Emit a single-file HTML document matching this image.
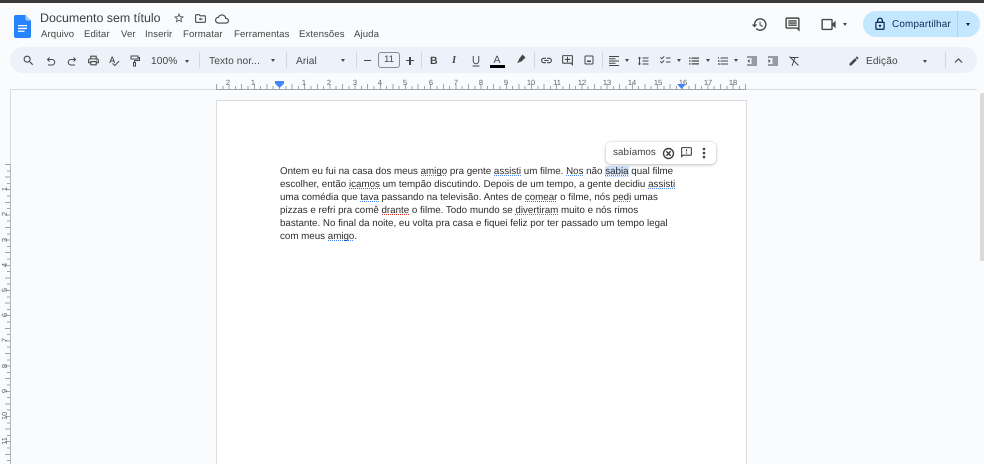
<!DOCTYPE html>
<html lang="pt"><head><meta charset="utf-8"><title>Documento sem título</title>
<style>
html,body{margin:0;padding:0;width:984px;height:464px;overflow:hidden;background:#f9fbfd}
#w{position:absolute;left:0;top:0;width:984px;height:464px;overflow:hidden;background:#f9fbfd;font-family:"Liberation Sans",Arial,sans-serif;color:#444746;text-rendering:geometricPrecision;filter:blur(.3px)}
.a{position:absolute;white-space:nowrap}
#top{left:0;top:0;width:984px;height:3px;background:#3a3a3a}
.m{top:28.500px;font-size:9.600px;line-height:12px;color:#444746;letter-spacing:.1px}
#tb{left:10px;top:47px;width:967px;height:26px;border-radius:13px;background:#edf2fa}
.t{top:54.500px;font-size:10.200px;line-height:13px;color:#444746;letter-spacing:.1px}
.s{top:52px;width:1px;height:16px;background:#d3d6da}
.ar{width:0;height:0;border-left:2.500px solid transparent;border-right:2.500px solid transparent;border-top:3px solid #444746}
svg.i{position:absolute;fill:#444746}
svg.o{position:absolute;fill:none;stroke:#444746;stroke-width:2}
#page{left:215.500px;top:100px;width:531px;height:370px;background:#fff;border:1px solid #dadce0;box-sizing:border-box}
.l{left:280px;font-size:9.780px;line-height:13px;color:#2b2b2b}
.bu{background:repeating-linear-gradient(90deg,#4285f4 0,#4285f4 1px,#fff 1px,#fff 2px) 0 calc(100% - 1px)/100% 1px no-repeat}
.ru{background:repeating-linear-gradient(90deg,#d93025 0,#d93025 1px,#fff 1px,#fff 2px) 0 calc(100% - 1px)/100% 1px no-repeat}
.rn{top:79px;font-size:7.500px;line-height:8px;color:#5f6368;transform:translateX(-50%)}
.vn{left:1px;font-size:7.500px;line-height:8px;color:#5f6368;transform:rotate(-90deg);width:8px;text-align:center}
#hr{left:216px;top:84px;width:530px;height:5px;background:repeating-linear-gradient(90deg,#a0a4a8 0,#a0a4a8 1px,transparent 1px,transparent 12.600px) 0 0/100% 100% no-repeat,repeating-linear-gradient(90deg,#a0a4a8 0,#a0a4a8 1px,transparent 1px,transparent 6.300px) 0 2px/100% 3px no-repeat}
#hl{left:10px;top:89px;width:967px;height:1px;background:#dadce0}
#hl2{left:216px;top:88.500px;width:530px;height:1px;background:#a0a4a8}
#vl{left:10px;top:90px;width:1px;height:374px;background:#dadce0}
#vr{left:5px;top:164px;width:5px;height:300px;background:repeating-linear-gradient(180deg,#a0a4a8 0,#a0a4a8 1px,transparent 1px,transparent 12.600px) 0 0/100% 100% no-repeat,repeating-linear-gradient(180deg,#a0a4a8 0,#a0a4a8 1px,transparent 1px,transparent 6.300px) 2px 0/3px 100% no-repeat}
#vl2{left:10px;top:164px;width:1px;height:300px;background:#b4b7ba}
#sb{left:980px;top:93px;width:4px;height:168px;background:#dadada;border-radius:2px 0 0 2px}
#share{left:863px;top:11px;width:117px;height:26px;border-radius:13px;background:#c2e7ff}
#pop{left:606px;top:142px;width:110px;height:22px;background:#fff;border-radius:5px;box-shadow:0 1px 3px rgba(60,64,67,.3),0 0 2px rgba(60,64,67,.15)}
</style></head><body><div id="w">
<div class="a" id="top"></div>

<svg class="a" style="left:14px;top:15px" width="17" height="23" viewBox="0 0 17 23"><path d="M2 0h9.500L17 5.500V21a2 2 0 0 1-2 2H2a2 2 0 0 1-2-2V2a2 2 0 0 1 2-2z" fill="#2684fc"/><path d="M11.500 0L17 5.500h-4a1.500 1.500 0 0 1-1.500-1.500z" fill="#a9cdfd"/><path d="M4 10h9v1.300H4zM4 12.800h9v1.300H4zM4 15.600h6.500v1.300H4z" fill="#fff"/></svg>
<div class="a" style="left:40px;top:10px;font-size:12.400px;line-height:16px;color:#3c4043">Documento sem título</div>
<svg class="i" style="left:173px;top:12px" width="12" height="12" viewBox="0 0 24 24"><path d="M22 9.240l-7.190-.62L12 2 9.190 8.630 2 9.240l5.460 4.730L5.820 21 12 17.270 18.180 21l-1.630-7.030L22 9.240zM12 15.400l-3.760 2.270 1-4.280-3.320-2.880 4.380-.38L12 6.100l1.710 4.040 4.380.38-3.320 2.880 1 4.280L12 15.400z"/></svg>
<svg class="i" style="left:194px;top:12px" width="13" height="13" viewBox="0 0 24 24"><path d="M20 6h-8l-2-2H4c-1.100 0-2 .9-2 2v12c0 1.100.9 2 2 2h16c1.100 0 2-.9 2-2V8c0-1.100-.9-2-2-2zm0 12H4V6h5.170l2 2H20v10zM9 13l3-3v2h4v2h-4v2z"/></svg>
<svg class="i" style="left:215px;top:12px" width="14" height="14" viewBox="0 0 24 24"><path d="M19.350 10.040A7.490 7.490 0 0 0 12 4C9.110 4 6.600 5.640 5.350 8.040A5.994 5.994 0 0 0 0 14c0 3.310 2.690 6 6 6h13c2.760 0 5-2.240 5-5 0-2.640-2.050-4.780-4.650-4.960zM19 18H6c-2.210 0-4-1.790-4-4s1.790-4 4-4h.71A5.500 5.500 0 0 1 12 6a5.500 5.500 0 0 1 5.500 5.500v.5H19a3 3 0 0 1 0 6z"/></svg>

<div class="a m" style="left:41px">Arquivo</div><div class="a m" style="left:84px">Editar</div><div class="a m" style="left:121px">Ver</div><div class="a m" style="left:145px">Inserir</div><div class="a m" style="left:183px">Formatar</div><div class="a m" style="left:234px">Ferramentas</div><div class="a m" style="left:299px">Extensões</div><div class="a m" style="left:354px">Ajuda</div>

<svg class="i" style="left:751px;top:16px" width="17" height="17" viewBox="0 0 24 24"><path d="M13 3a9 9 0 0 0-9 9H1l4 4 4-4H6a7 7 0 1 1 2.050 4.950L6.640 18.360A9 9 0 1 0 13 3zm-1 5v5l4.280 2.540.72-1.210-3.500-2.080V8z"/></svg>
<svg class="i" style="left:784px;top:16px" width="17" height="17" viewBox="0 0 24 24"><path d="M20 2H4c-1.100 0-2 .9-2 2v12c0 1.100.9 2 2 2h14l4 4V4c0-1.100-.9-2-2-2zm0 15.170L18.830 16H4V4h16v13.170zM6 12h12v2H6zm0-3h12v2H6zm0-3h12v2H6z"/></svg>
<svg class="i" style="left:820px;top:16px" width="17" height="17" viewBox="0 0 24 24"><path d="M18 10.480V6c0-1.100-.9-2-2-2H4c-1.100 0-2 .9-2 2v12c0 1.100.9 2 2 2h12c1.100 0 2-.9 2-2v-4.480l4 3.980v-11zM16 18H4V6h12z"/></svg>
<div class="a ar" style="left:843px;top:23px"></div>
<div class="a" id="share"></div>
<div class="a" style="left:957px;top:11px;width:1px;height:26px;background:#a8d4f0"></div>
<svg class="a" style="left:873px;top:17px;fill:#041e49" width="14" height="14" viewBox="0 0 24 24"><path d="M18 8h-1V6c0-2.760-2.240-5-5-5S7 3.240 7 6v2H6c-1.100 0-2 .9-2 2v10c0 1.100.9 2 2 2h12c1.100 0 2-.9 2-2V10c0-1.100-.9-2-2-2zM9 6c0-1.660 1.340-3 3-3s3 1.340 3 3v2H9V6zm9 14H6V10h12v10zm-6-3a2 2 0 1 0 0-4 2 2 0 0 0 0 4z"/></svg>
<div class="a" style="left:892px;top:17.500px;font-size:9.900px;line-height:13px;color:#0b2a55;letter-spacing:.2px">Compartilhar</div>
<div class="a ar" style="left:966px;top:23px;border-top-color:#041e49"></div>

<div class="a" id="tb"></div>
<svg class="i" style="left:21.500px;top:54px" width="13" height="13" viewBox="0 0 24 24"><path d="M15.500 14h-.79l-.28-.27A6.470 6.470 0 0 0 16 9.500 6.500 6.500 0 1 0 9.500 16c1.610 0 3.090-.59 4.230-1.570l.27.28v.79l5 4.990L20.490 19l-4.990-5zm-6 0C7.010 14 5 11.990 5 9.500S7.010 5 9.500 5 14 7.010 14 9.500 11.990 14 9.500 14z"/></svg>
<svg class="o" style="left:46px;top:56px" width="10" height="11" viewBox="0 0 20 22" stroke-width="2.400"><path d="M7 3L3 7l4 4M3 7h9a5.500 5.500 0 0 1 0 11H4"/></svg>
<svg class="o" style="left:67px;top:56px" width="10" height="11" viewBox="0 0 20 22" stroke-width="2.400"><path d="M13 3l4 4-4 4M17 7H8a5.500 5.500 0 0 0 0 11h8"/></svg>
<svg class="i" style="left:87px;top:54px" width="13" height="13" viewBox="0 0 24 24"><path d="M19 8h-1V3H6v5H5c-1.660 0-3 1.340-3 3v6h4v4h12v-4h4v-6c0-1.660-1.340-3-3-3zM8 5h8v3H8V5zm8 14H8v-4h8v4zm2-4v-2H6v2H4v-4c0-.55.45-1 1-1h14c.55 0 1 .45 1 1v4h-2zm0-4.500a1 1 0 1 0 0 2 1 1 0 0 0 0-2z"/></svg>
<svg class="i" style="left:108px;top:54.500px" width="12" height="12" viewBox="0 0 24 24"><path d="M12.450 16h2.090L9.430 3H7.570L2.460 16h2.090l1.120-3h5.640l1.140 3zm-6.020-5L8.500 5.480 10.570 11H6.430zm15.160.59l-8.090 8.090L9.830 16l-1.410 1.410 5.090 5.090L23 13l-1.410-1.410z"/></svg>
<svg class="o" style="left:130px;top:55px" width="10" height="12" viewBox="0 0 20 24"><path d="M2 2h14v6H2zM16 5h3v6H9v4"/><path d="M7 15h4v7H7z"/></svg>
<div class="a t" style="left:151px">100%</div><div class="a ar" style="left:185px;top:59.500px"></div>
<div class="a s" style="left:199px"></div>
<div class="a t" style="left:209px">Texto nor...</div><div class="a ar" style="left:271px;top:59px"></div>
<div class="a s" style="left:286px"></div>
<div class="a t" style="left:296px">Arial</div><div class="a ar" style="left:341px;top:59px"></div>
<div class="a s" style="left:356px"></div>
<div class="a" style="left:364px;top:60px;width:7px;height:1.200px;background:#444746"></div>
<div class="a" style="left:378px;top:52px;width:22px;height:16px;box-sizing:border-box;border:1px solid #8a8d90;border-radius:3px;font-size:9.500px;line-height:14px;text-align:center;color:#444746">11</div>
<div class="a" style="left:406px;top:60px;width:8px;height:1.200px;background:#444746"></div><div class="a" style="left:409.400px;top:56.500px;width:1.200px;height:8px;background:#444746"></div>
<div class="a s" style="left:421px"></div>
<div class="a" style="left:430px;top:54.500px;font-size:10.500px;line-height:12px;font-weight:700;color:#444746">B</div>
<div class="a" style="left:452px;top:54.500px;font-size:10.500px;line-height:12px;font-style:italic;font-weight:700;color:#444746;font-family:'Liberation Serif',serif">I</div>
<svg class="o" style="left:472px;top:55px" width="8" height="12" viewBox="0 0 16 24"><path d="M2.500 2v10a5.500 5.500 0 0 0 11 0V2M1 22h14"/></svg>
<div class="a" style="left:493.500px;top:54px;font-size:10.500px;line-height:12px;color:#444746">A</div>
<div class="a" style="left:490px;top:65px;width:15px;height:2.500px;background:#000"></div>
<svg class="i" style="left:516px;top:54px" width="10" height="10" viewBox="0 0 20 20"><path d="M13 1l6 6-8 8-4 1-1.500 1.500-3.500-.5 3-3 1-4z"/></svg>
<div class="a s" style="left:534px"></div>
<svg class="i" style="left:540px;top:54px" width="13" height="13" viewBox="0 0 24 24"><path d="M3.900 12c0-1.710 1.390-3.100 3.100-3.100h4V7H7c-2.760 0-5 2.240-5 5s2.240 5 5 5h4v-1.900H7c-1.710 0-3.100-1.390-3.100-3.100zM8 13h8v-2H8v2zm9-6h-4v1.900h4c1.710 0 3.100 1.390 3.100 3.100s-1.390 3.100-3.100 3.100h-4V17h4c2.760 0 5-2.240 5-5s-2.240-5-5-5z"/></svg>
<svg class="i" style="left:561px;top:54px" width="13" height="13" viewBox="0 0 24 24"><path d="M20 2H4c-1.100 0-2 .9-2 2v12c0 1.100.9 2 2 2h14l4 4V4c0-1.100-.9-2-2-2zm0 15.170L18.830 16H4V4h16v13.170zM13 5h-2v4H7v2h4v4h2v-4h4V9h-4z"/></svg>
<svg class="i" style="left:583px;top:54px" width="12" height="12" viewBox="0 0 24 24"><path d="M19 3H5c-1.100 0-2 .9-2 2v14c0 1.100.9 2 2 2h14c1.100 0 2-.9 2-2V5c0-1.100-.9-2-2-2zm0 16H5V5h14v14zM8 16h8v-3H8z"/></svg>
<div class="a s" style="left:602px"></div>
<svg class="i" style="left:608px;top:54.500px" width="12" height="12" viewBox="0 0 24 24"><path d="M2 2h20v2H2zm0 4.500h13v2H2zM2 11h20v2H2zm0 4.500h13v2H2zM2 20h20v2H2z"/></svg>
<div class="a ar" style="left:624.500px;top:59px"></div>
<svg class="i" style="left:637px;top:54.500px" width="12" height="12" viewBox="0 0 24 24"><path d="M6 7h2.500L5 3.500 1.500 7H4v10H1.500L5 20.500 8.500 17H6V7zm5-2v2h12V5H11zm0 14h12v-2H11v2zm0-6h12v-2H11v2z"/></svg>
<svg class="i" style="left:659px;top:54px" width="12" height="12" viewBox="0 0 24 24"><path d="M23 7h-9v2h9V7zm0 8h-9v2h9v-2zM5.540 11L2 7.460l1.410-1.410 2.120 2.120 4.240-4.240 1.410 1.410L5.540 11zm0 8L2 15.460l1.410-1.410 2.120 2.120 4.240-4.240 1.410 1.410L5.540 19z"/></svg>
<div class="a ar" style="left:676.500px;top:59px"></div>
<svg class="i" style="left:688px;top:54.500px" width="12" height="12" viewBox="0 0 24 24"><path d="M2 5h3v2.500H2zm0 5.800h3v2.500H2zM2 16.500h3V19H2zM7 5h15v2.500H7zm0 5.800h15v2.500H7zm0 5.700h15V19H7z"/></svg>
<div class="a ar" style="left:705.500px;top:59px"></div>
<svg class="i" style="left:717px;top:54.500px" width="12" height="12" viewBox="0 0 24 24"><path d="M2 17h2v.5H3v1h1v.5H2v1h3v-4H2v1zm1-9h1V4H2v1h1v3zm-1 3h1.800L2 13.100v.9h3v-1H3.200L5 10.900V10H2v1zm5-6v2h15V5H7zm0 14h15v-2H7v2zm0-6h15v-2H7v2z"/></svg>
<div class="a ar" style="left:733.500px;top:59px"></div>
<svg class="i" style="left:746px;top:54.500px" width="12" height="12" viewBox="0 0 24 24"><path d="M2 21h20v-2H2v2zM11 17h11v-2H11v2zM2 3v2h20V3H2zm9 6h11V7H11v2zm0 4h11v-2H11v2zM7 8v8l-4-4z"/></svg>
<svg class="i" style="left:767px;top:54.500px" width="12" height="12" viewBox="0 0 24 24"><path d="M2 21h20v-2H2v2zM3 8v8l4-4-4-4zm8 9h11v-2H11v2zM2 3v2h20V3H2zm9 6h11V7H11v2zm0 4h11v-2H11v2z"/></svg>
<svg class="o" style="left:788px;top:54.500px" width="12" height="12" viewBox="0 0 24 24"><path d="M3 3l18 18M6 5h15M14 5l-6 17"/></svg>
<svg class="i" style="left:848px;top:54.500px" width="12" height="12" viewBox="0 0 24 24"><path d="M3 17.250V21h3.750L17.810 9.940l-3.750-3.750L3 17.250zM20.710 7.040a1 1 0 0 0 0-1.410l-2.340-2.340a1 1 0 0 0-1.410 0l-1.830 1.830 3.750 3.750 1.830-1.830z"/></svg>
<div class="a t" style="left:866px">Edição</div>
<div class="a ar" style="left:923px;top:59.500px"></div>
<div class="a s" style="left:945px"></div>
<svg class="a" style="left:954px;top:57px;fill:none;stroke:#444746;stroke-width:1.200" width="9" height="7" viewBox="0 0 9 7"><path d="M1 5.500l3.500-3.500 3.500 3.500"/></svg>

<div class="a" id="hl"></div><div class="a" id="hl2"></div><div class="a" id="hr"></div>
<div class="a rn" style="left:228px">2</div><div class="a rn" style="left:253px">1</div><div class="a rn" style="left:304px">1</div><div class="a rn" style="left:329px">2</div><div class="a rn" style="left:355px">3</div><div class="a rn" style="left:380px">4</div><div class="a rn" style="left:405px">5</div><div class="a rn" style="left:431px">6</div><div class="a rn" style="left:456px">7</div><div class="a rn" style="left:481px">8</div><div class="a rn" style="left:506px">9</div><div class="a rn" style="left:531px">10</div><div class="a rn" style="left:557px">11</div><div class="a rn" style="left:582px">12</div><div class="a rn" style="left:607px">13</div><div class="a rn" style="left:632px">14</div><div class="a rn" style="left:658px">15</div><div class="a rn" style="left:683px">16</div><div class="a rn" style="left:708px">17</div><div class="a rn" style="left:733px">18</div>
<svg class="a" style="left:275px;top:81px" width="9" height="7" viewBox="0 0 9 7"><path d="M0 0h9v2.500L4.500 7 0 2.500z" fill="#4285f4"/></svg>
<svg class="a" style="left:677px;top:84px" width="9" height="5" viewBox="0 0 9 5"><path d="M0 0h9L4.500 5z" fill="#4285f4"/></svg>

<div class="a" id="vl"></div><div class="a" id="vl2"></div><div class="a" id="vr"></div>
<div class="a vn" style="top:185px">1</div><div class="a vn" style="top:210px">2</div><div class="a vn" style="top:236px">3</div><div class="a vn" style="top:261px">4</div><div class="a vn" style="top:286px">5</div><div class="a vn" style="top:311px">6</div><div class="a vn" style="top:336px">7</div><div class="a vn" style="top:362px">8</div><div class="a vn" style="top:387px">9</div><div class="a vn" style="top:412px">10</div><div class="a vn" style="top:437px">11</div>

<div class="a" id="sb"></div>
<div class="a" id="page"></div>

<div class="a l" style="top:164.500px">Ontem eu fui na casa dos meus <span class="bu">amigo</span> pra gente <span class="bu">assisti</span> um filme. <span class="bu">Nos</span> não <span class="bu" style="background-color:#d3e3fd">sabia</span> qual filme</div>
<div class="a l" style="top:177.700px">escolher, então <span class="ru">icamos</span> um tempão discutindo. Depois de um tempo, a gente decidiu <span class="bu">assisti</span></div>
<div class="a l" style="top:190.800px">uma comédia que <span class="bu">tava</span> passando na televisão. Antes de <span class="ru">comear</span> o filme, nós <span class="bu">pedi</span> umas</div>
<div class="a l" style="top:203.900px">pizzas e refri pra comê <span class="ru">drante</span> o filme. Todo mundo se <span class="bu">divertiram</span> muito e nós rimos</div>
<div class="a l" style="top:217px">bastante. No final da noite, eu volta pra casa e fiquei feliz por ter passado um tempo legal</div>
<div class="a l" style="top:230.100px">com meus <span class="bu">amigo</span>.</div>

<div class="a" id="pop"></div>
<div class="a" style="left:613px;top:146px;font-size:9.800px;line-height:13px;color:#3c4043;letter-spacing:.05px">sabíamos</div>
<svg class="a" style="left:662px;top:147px" width="13" height="13" viewBox="0 0 13 13"><circle cx="6.500" cy="6.500" r="5" fill="none" stroke="#3c4043" stroke-width="1.400"/><path d="M4.300 4.300l4.400 4.400M8.700 4.300l-4.400 4.400" stroke="#3c4043" stroke-width="1.400"/></svg>
<svg class="i" style="left:680px;top:146px;fill:#3c4043" width="13" height="13" viewBox="0 0 24 24"><path d="M20 2H4c-1.100 0-2 .9-2 2v18l4-4h14c1.100 0 2-.9 2-2V4c0-1.100-.9-2-2-2zm0 14H5.170L4 17.170V4h16v12zM11 12h2v2h-2zm0-6h2v4h-2z"/></svg>
<svg class="a" style="left:702px;top:147px" width="4" height="12" viewBox="0 0 4 12"><circle cx="2" cy="2" r="1.300" fill="#3c4043"/><circle cx="2" cy="6" r="1.300" fill="#3c4043"/><circle cx="2" cy="10" r="1.300" fill="#3c4043"/></svg>
</div></body></html>
